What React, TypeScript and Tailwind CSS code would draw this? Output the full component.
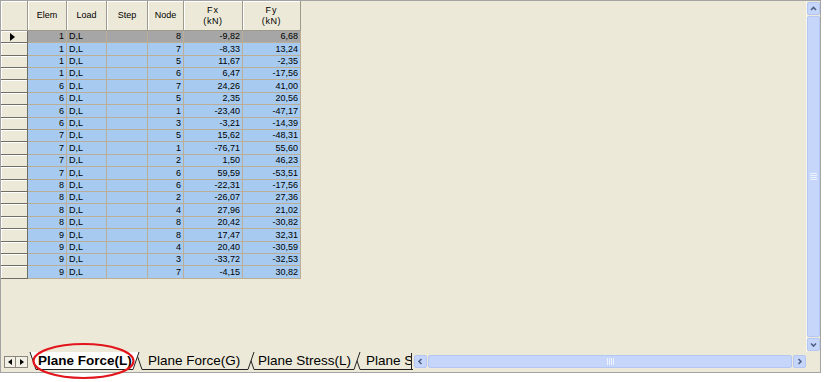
import React from "react";

const rows: [string, string, string, string, string][] = [
  ["1", "D,L", "8", "-9,82", "6,68"],
  ["1", "D,L", "7", "-8,33", "13,24"],
  ["1", "D,L", "5", "11,67", "-2,35"],
  ["1", "D,L", "6", "6,47", "-17,56"],
  ["6", "D,L", "7", "24,26", "41,00"],
  ["6", "D,L", "5", "2,35", "20,56"],
  ["6", "D,L", "1", "-23,40", "-47,17"],
  ["6", "D,L", "3", "-3,21", "-14,39"],
  ["7", "D,L", "5", "15,62", "-48,31"],
  ["7", "D,L", "1", "-76,71", "55,60"],
  ["7", "D,L", "2", "1,50", "46,23"],
  ["7", "D,L", "6", "59,59", "-53,51"],
  ["8", "D,L", "6", "-22,31", "-17,56"],
  ["8", "D,L", "2", "-26,07", "27,36"],
  ["8", "D,L", "4", "27,96", "21,02"],
  ["8", "D,L", "8", "20,42", "-30,82"],
  ["9", "D,L", "8", "17,47", "32,31"],
  ["9", "D,L", "4", "20,40", "-30,59"],
  ["9", "D,L", "3", "-33,72", "-32,53"],
  ["9", "D,L", "7", "-4,15", "30,82"],
];

const font = { fontFamily: '"Liberation Sans", "DejaVu Sans", Arial, sans-serif' };

function Chevron({ dir }: { dir: "up" | "down" | "left" | "right" }) {
  const pts =
    dir === "up"
      ? "2,6 4.5,3.5 7,6"
      : dir === "down"
      ? "2,3.5 4.5,6 7,3.5"
      : dir === "left"
      ? "5.5,2 3,4.5 5.5,7"
      : "3.5,2 6,4.5 3.5,7";
  return (
    <svg width="9" height="9" viewBox="0 0 9 9">
      <polyline points={pts} fill="none" stroke="#4d6185" strokeWidth="1.6" />
    </svg>
  );
}

function ScrollBtn({ dir }: { dir: "up" | "down" | "left" | "right" }) {
  return (
    <div className="w-[13px] h-[13px] shrink-0 rounded-[2px] border border-[#b4c6f3] bg-[#c6d6fb] flex items-center justify-center">
      <Chevron dir={dir} />
    </div>
  );
}

function HeaderCell({ w, children }: { w: string; children: React.ReactNode }) {
  return (
    <div
      className={`${w} h-full shrink-0 border-r border-b border-[#9d9a8c] shadow-[inset_1px_1px_0_#ffffff] flex flex-col items-center justify-center leading-[11px] text-[9px] text-black`}
    >
      {children}
    </div>
  );
}

export default function App() {
  return (
    <div className="relative w-[825px] h-[382px] bg-white overflow-hidden" style={font}>
      <div className="w-[821px] h-[373px] border border-[#a3a3a3] bg-[#ece9d8] flex flex-col">
        {/* top area */}
        <div className="h-[351px] flex">
          <div className="flex-1 flex flex-col">
            {/* header */}
            <div className="h-[30px] flex">
              <HeaderCell w="w-[27px]">{""}</HeaderCell>
              <HeaderCell w="w-[39px]">Elem</HeaderCell>
              <HeaderCell w="w-[40px]">Load</HeaderCell>
              <HeaderCell w="w-[41px]">Step</HeaderCell>
              <HeaderCell w="w-[36px]">Node</HeaderCell>
              <HeaderCell w="w-[59px]">
                <span className="tracking-[1px]">Fx</span>
                <span className="tracking-[0.6px]">(kN)</span>
              </HeaderCell>
              <HeaderCell w="w-[58px]">
                <span className="tracking-[1px]">Fy</span>
                <span className="tracking-[0.6px]">(kN)</span>
              </HeaderCell>
            </div>
            {rows.map((r, i) => {
              const h = i % 5 === 1 || i % 5 === 4 ? "h-[13px]" : "h-[12px]";
              const bg = i === 0 ? "bg-[#a6a6a6]" : "bg-[#a6caf0]";
              const cell = `h-full shrink-0 border-r border-b border-[#bcae96] ${bg} flex items-center text-[9px] text-black leading-none`;
              return (
                <div key={i} className={`${h} flex`}>
                  <div className="w-[27px] h-full shrink-0 border-r border-b border-[#6f6d64] shadow-[inset_1px_1px_0_#ffffff] bg-[#ece9d8] flex items-center pl-[9px]">
                    {i === 0 && (
                      <svg width="6" height="8" viewBox="0 0 6 8">
                        <polygon points="0,0 5,4 0,8" fill="#000" />
                      </svg>
                    )}
                  </div>
                  <div className={`${cell} w-[39px] justify-end pr-[2px]`}>{r[0]}</div>
                  <div className={`${cell} w-[40px] pl-[2px]`}>{r[1]}</div>
                  <div className={`${cell} w-[41px]`}></div>
                  <div className={`${cell} w-[36px] justify-end pr-[2px]`}>{r[2]}</div>
                  <div className={`${cell} w-[59px] justify-end pr-[2px]`}>{r[3]}</div>
                  <div className={`${cell} w-[58px] justify-end pr-[2px]`}>{r[4]}</div>
                </div>
              );
            })}
          </div>
          {/* vertical scrollbar */}
          <div className="w-[14px] h-full flex flex-col items-center border-l border-[#f7f6f1] py-[1px] gap-[1px]">
            <ScrollBtn dir="up" />
            <div className="flex-1 w-[13px] rounded-[2px] border border-[#b4c6f3] bg-[#c6d6fb] flex items-center justify-center">
              <div className="w-[7px] flex flex-col gap-[1px]">
                <div className="h-[1px] bg-[#eef3fe]" />
                <div className="h-[1px] bg-[#eef3fe]" />
                <div className="h-[1px] bg-[#eef3fe]" />
                <div className="h-[1px] bg-[#eef3fe]" />
              </div>
            </div>
            <ScrollBtn dir="down" />
          </div>
        </div>
        {/* bottom area */}
        <div className="h-[20px] flex">
          {/* nav buttons */}
          <div className="w-[27px] h-full shrink-0 flex items-center pl-[3px]">
            <div className="w-[12px] h-[12px] border border-[#8a877a] bg-[#f2f0e6] flex items-center justify-center">
              <svg width="4" height="6" viewBox="0 0 4 6">
                <polygon points="4,0 0,3 4,6" fill="#000" />
              </svg>
            </div>
            <div className="w-[12px] h-[12px] border border-l-0 border-[#8a877a] bg-[#f2f0e6] flex items-center justify-center">
              <svg width="4" height="6" viewBox="0 0 4 6">
                <polygon points="0,0 4,3 0,6" fill="#000" />
              </svg>
            </div>
          </div>
          {/* tabs */}
          <div className="relative w-[385px] h-full shrink-0 flex text-[13.5px] text-black leading-none">
            <svg className="absolute inset-0" width="385" height="20" viewBox="0 0 385 20">
              <polygon points="326,0 332,17 400,17 406,0" fill="#ece9d8" />
              <polyline points="326,0 332,17.5 400,17.5" fill="none" stroke="#222" strokeWidth="1" />
              <polygon points="220,0 226,17 326,17 332,0" fill="#ece9d8" />
              <polyline points="220,0 226,17.5 326,17.5 332,0" fill="none" stroke="#222" strokeWidth="1" />
              <polygon points="108,0 114,17 220,17 226,0" fill="#ece9d8" />
              <polyline points="108,0 114,17.5 220,17.5 226,0" fill="none" stroke="#222" strokeWidth="1" />
              <polygon points="2,0 8,17 105,17 111,0" fill="#ffffff" />
              <polyline points="2,0 8,17.5 105,17.5 111,0" fill="none" stroke="#222" strokeWidth="1" />
              <line x1="383.5" y1="1" x2="383.5" y2="18" stroke="#222" strokeWidth="1" />
            </svg>
            <div className="relative w-[112px] h-[18px] pl-[10px] flex items-center font-bold whitespace-nowrap">
              Plane Force(L)
            </div>
            <div className="relative w-[112px] h-[18px] pl-[8px] flex items-center whitespace-nowrap">
              Plane Force(G)
            </div>
            <div className="relative w-[106px] h-[18px] pl-[6px] flex items-center whitespace-nowrap">
              Plane Stress(L)
            </div>
            <div className="relative w-[53px] h-[18px] pl-[8px] flex items-center whitespace-nowrap overflow-hidden">
              Plane Stress(G)
            </div>
          </div>
          {/* horizontal scrollbar */}
          <div className="flex-1 h-full flex items-center gap-[1px] pl-[1px] pb-[1px]">
            <ScrollBtn dir="left" />
            <div className="flex-1 h-[13px] rounded-[2px] border border-[#b4c6f3] bg-[#c6d6fb] flex items-center justify-center">
              <div className="h-[7px] flex gap-[1px]">
                <div className="w-[1px] bg-[#eef3fe]" />
                <div className="w-[1px] bg-[#eef3fe]" />
                <div className="w-[1px] bg-[#eef3fe]" />
                <div className="w-[1px] bg-[#eef3fe]" />
              </div>
            </div>
            <ScrollBtn dir="right" />
          </div>
          <div className="w-[14px] h-full shrink-0" />
        </div>
      </div>
      {/* red annotation ellipse */}
      <svg className="absolute left-0 top-0 pointer-events-none" width="825" height="382" viewBox="0 0 825 382">
        <ellipse cx="83.5" cy="361" rx="50" ry="17" fill="none" stroke="#e3151c" strokeWidth="2.2" />
      </svg>
    </div>
  );
}
